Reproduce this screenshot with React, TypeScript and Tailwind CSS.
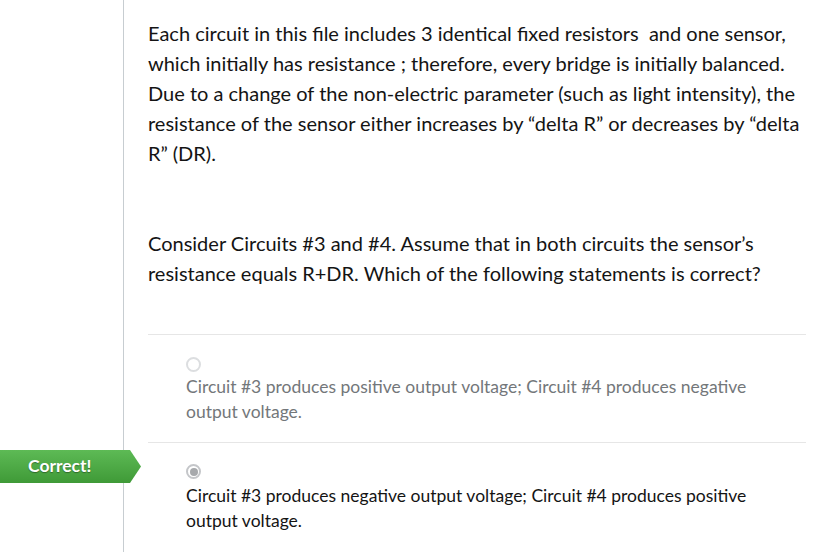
export default function App() {
  return (
    <div className="w-[831px] h-[552px] bg-white overflow-hidden flex font-['Lato',sans-serif] text-[#141414]">
      {/* left rail */}
      <div className="w-[123px] shrink-0 flex flex-col">
        <div className="h-[450px]" />
        <div className="relative h-[33px] w-[141px] z-10">
          <div className="absolute inset-0 bg-gradient-to-b from-[#5dba55] to-[#3f9a37] [clip-path:polygon(0_0,130px_0,141px_50%,130px_100%,0_100%)]" />
          <div className="relative h-full w-[130px] flex items-center pl-[28px] text-white text-[17.5px] font-bold [text-shadow:0_1px_1px_rgba(0,0,0,0.35)]">
            Correct!
          </div>
        </div>
      </div>
      <div className="w-px shrink-0 bg-[#c7cdd1]" />
      {/* content */}
      <div className="flex-1 pl-[24px] pr-[22px] pt-[18px]">
        <p className="text-[20px] leading-[30px]">
          Each circuit in this file includes 3 identical fixed resistors&nbsp; and one sensor, which initially has resistance ; therefore, every bridge is initially balanced. Due to a change of the non-electric parameter (such as light intensity), the resistance of the sensor either increases by “delta R” or decreases by “delta R” (DR).
        </p>
        <p className="text-[20px] leading-[30px] mt-[60px]">
          Consider Circuits #3 and #4. Assume that in both circuits the sensor’s resistance equals R+DR. Which of the following statements is correct?
        </p>
        <div className="mt-[46px] border-t border-[#e6e6e6] w-[658px]">
          <div className="pl-[38px] pt-[22px] pb-[18px]">
            <div className="w-[15px] h-[15px] rounded-full border-2 border-[#dcdee0] bg-white" />
            <p className="mt-[2px] text-[17.5px] leading-[25px] text-[#73777a] w-[580px]">
              Circuit #3 produces positive output voltage; Circuit #4 produces negative output voltage.
            </p>
          </div>
          <div className="border-t border-[#e6e6e6] pl-[38px] pt-[21px] pb-[18px]">
            <div className="w-[15px] h-[15px] rounded-full border-2 border-[#c4c6c9] bg-white flex items-center justify-center">
              <div className="w-[8px] h-[8px] rounded-full bg-[#a7a9ac]" />
            </div>
            <p className="mt-[4px] text-[17.5px] leading-[25px] w-[580px]">
              Circuit #3 produces negative output voltage; Circuit #4 produces positive output voltage.
            </p>
          </div>
        </div>
      </div>
    </div>
  );
}
